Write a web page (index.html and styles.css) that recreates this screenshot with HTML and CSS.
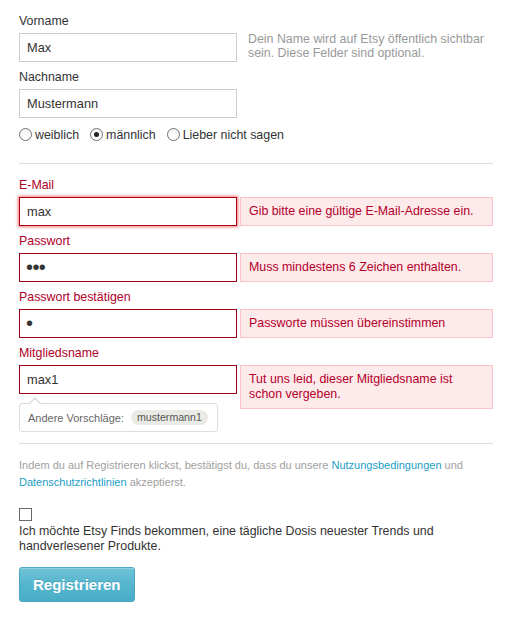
FILE: index.html
```html
<!DOCTYPE html>
<html lang="de">
<head>
<meta charset="utf-8">
<title>Registrieren</title>
<link rel="stylesheet" href="styles.css">
</head>
<body>
<form class="form">
  <div class="field">
    <div class="main">
      <label class="lbl">Vorname</label>
      <input class="inp" type="text" value="Max">
    </div>
    <p class="hint">Dein Name wird auf Etsy öffentlich sichtbar sein. Diese Felder sind optional.</p>
  </div>
  <div class="field">
    <div class="main">
      <label class="lbl">Nachname</label>
      <input class="inp" type="text" value="Mustermann">
    </div>
  </div>
  <div class="radios">
    <label class="opt"><input class="radio" type="radio" name="g">weiblich</label>
    <label class="opt"><input class="radio" type="radio" name="g" checked>männlich</label>
    <label class="opt"><input class="radio" type="radio" name="g">Lieber nicht sagen</label>
  </div>

  <div class="divider first"></div>

  <div class="field">
    <div class="main">
      <label class="lbl err">E-Mail</label>
      <input class="inp bad glow" type="text" value="max">
    </div>
    <div class="side"><div class="msg">Gib bitte eine gültige E-Mail-Adresse ein.</div></div>
  </div>
  <div class="field">
    <div class="main">
      <label class="lbl err">Passwort</label>
      <input class="inp bad pw" type="password" value="abc">
    </div>
    <div class="side"><div class="msg">Muss mindestens 6 Zeichen enthalten.</div></div>
  </div>
  <div class="field">
    <div class="main">
      <label class="lbl err">Passwort bestätigen</label>
      <input class="inp bad pw" type="password" value="a">
    </div>
    <div class="side"><div class="msg">Passworte müssen übereinstimmen</div></div>
  </div>
  <div class="field">
    <div class="main">
      <label class="lbl err">Mitgliedsname</label>
      <input class="inp bad" type="text" value="max1">
      <div class="suggest">
        <span class="suggest-label">Andere Vorschläge:</span>
        <span class="chip">mustermann1</span>
      </div>
    </div>
    <div class="side"><div class="msg">Tut uns leid, dieser Mitgliedsname ist schon vergeben.</div></div>
  </div>

  <div class="divider second"></div>

  <p class="terms">Indem du auf Registrieren klickst, bestätigst du, dass du unsere <a href="#">Nutzungsbedingungen</a> und <a href="#">Datenschutzrichtlinien</a> akzeptierst.</p>

  <label class="news">
    <input class="check" type="checkbox">
    <span>Ich möchte Etsy Finds bekommen, eine tägliche Dosis neuester Trends und handverlesener Produkte.</span>
  </label>

  <button class="btn" type="button">Registrieren</button>
</form>
</body>
</html>
```

FILE: styles.css
```css
html, body {
  margin: 0;
  background: #ffffff;
}
body {
  font-family: "Liberation Sans", Arial, sans-serif;
  color: #333333;
  padding: 14px 16px 0 19px;
}
.form {
  width: 474px;
  display: flex;
  flex-direction: column;
}
.field {
  display: grid;
  grid-template-columns: 218px 253px;
  column-gap: 3px;
  margin-bottom: 8px;
  align-items: start;
}
.main {
  display: flex;
  flex-direction: column;
}
.lbl {
  font-size: 12.4px;
  line-height: 14px;
  margin-bottom: 5px;
  color: #333333;
}
.lbl.err {
  color: #b0002a;
}
.inp {
  box-sizing: border-box;
  width: 218px;
  height: 29px;
  margin: 0;
  border: 1px solid #cccccc;
  border-radius: 0;
  padding: 0 7px;
  font-family: "Liberation Sans", Arial, sans-serif;
  font-size: 12.8px;
  color: #333333;
  background: #ffffff;
  outline: none;
}
.inp.bad {
  border-color: #9c0010;
}
.inp.glow {
  border-color: #b00010;
  box-shadow: 0 0 3px 1px rgba(240, 30, 30, 0.6);
}
.inp.pw {
  font-size: 20px;
  letter-spacing: -0.6px;
  padding-left: 6px;
  color: #333333;
}
.hint {
  margin: 0;
  padding: 18px 0 0 8px;
  font-size: 12.4px;
  line-height: 14.4px;
  color: #999999;
}
.side {
  padding-top: 19px;
}
.msg {
  background: #fdeaea;
  border: 1px solid #fac3ca;
  padding: 6px 8px;
  font-size: 12.4px;
  line-height: 15px;
  color: #b5002a;
}
.radios {
  display: flex;
  align-items: center;
  margin-top: 2px;
  font-size: 12.4px;
  line-height: 15px;
  color: #333333;
}
.opt {
  display: flex;
  align-items: center;
  margin-right: 11px;
}
.radio {
  -webkit-appearance: none;
  appearance: none;
  box-sizing: border-box;
  width: 13px;
  height: 13px;
  margin: 0 3px 0 0;
  border: 1px solid #6f6f6f;
  border-radius: 50%;
  background: linear-gradient(#f4f4f4, #ffffff);
  position: relative;
  top: -1px;
}
.radio:checked::after {
  content: "";
  position: absolute;
  left: 3px;
  top: 3px;
  width: 5px;
  height: 5px;
  border-radius: 50%;
  background: #222222;
}
.divider {
  height: 1px;
  background: #dedede;
}
.divider.first {
  margin: 20px 0 14px;
}
.divider.second {
  margin: 3px 0 13px;
}
.suggest {
  position: relative;
  box-sizing: border-box;
  width: 199px;
  height: 29px;
  margin-top: 9px;
  border: 1px solid #dddddd;
  border-radius: 3px;
  padding: 0 7px 0 8px;
  display: flex;
  align-items: center;
  font-size: 11px;
  color: #666666;
  background: #ffffff;
}
.suggest::before {
  content: "";
  position: absolute;
  left: 9px;
  top: -7px;
  border-left: 6px solid transparent;
  border-right: 6px solid transparent;
  border-bottom: 6px solid #dddddd;
}
.suggest::after {
  content: "";
  position: absolute;
  left: 10px;
  top: -5px;
  border-left: 5px solid transparent;
  border-right: 5px solid transparent;
  border-bottom: 5px solid #ffffff;
}
.suggest-label {
  margin-right: 7px;
}
.chip {
  background: #ebebe5;
  border-radius: 8px;
  padding: 0 6px;
  height: 15px;
  line-height: 15px;
  font-size: 10.6px;
  color: #555555;
}
.terms {
  margin: 0;
  font-size: 11px;
  line-height: 17px;
  color: #a0a0a0;
}
.terms a {
  color: #1b9dc4;
  text-decoration: none;
}
.news {
  display: flex;
  flex-direction: column;
  margin-top: 17px;
  font-size: 12.4px;
  line-height: 15px;
  color: #333333;
}
.check {
  -webkit-appearance: none;
  appearance: none;
  box-sizing: border-box;
  width: 13px;
  height: 13px;
  margin: 0 0 3px 0;
  border: 1px solid #6a6a6a;
  background: #ffffff;
  border-radius: 0;
}
.btn {
  align-self: flex-start;
  box-sizing: border-box;
  height: 35px;
  margin-top: 13px;
  padding: 0 13px;
  border: 1px solid #4aa6bf;
  border-radius: 3px;
  background: linear-gradient(#6fc3d8, #55b5ce 50%, #4aadc7);
  box-shadow: inset 0 1px 0 rgba(255, 255, 255, 0.25), 0 1px 1px rgba(0, 0, 0, 0.08);
  color: #ffffff;
  font-family: "Liberation Sans", Arial, sans-serif;
  font-weight: bold;
  font-size: 15px;
  text-shadow: 0 -1px 0 rgba(0, 0, 0, 0.12);
}
```
